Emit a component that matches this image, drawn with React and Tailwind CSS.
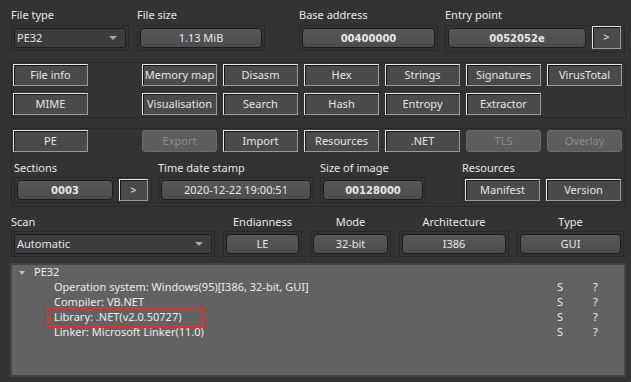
const BTN = "h-[22px] w-[75px] shrink-0 flex items-center justify-center bg-[#4a4a4a] border border-t-[#ececec] border-l-[#ececec] border-b-[#9a9a9a] border-r-[#9a9a9a] shadow-[inset_1px_1px_0_#141414] text-[#e6e6e6]";
const DIS = "h-[22px] w-[75px] shrink-0 flex items-center justify-center rounded-[3px] bg-[#5d5d5d] border border-[#6a6a6a] text-[#8c8c8c]";
const FIELD = "h-[20px] rounded-[4px] bg-linear-to-b from-[#585858] to-[#4c4c4c] border border-[#1c1c1c] flex items-center justify-center text-[#e8e8e8]";
const BOLD = "font-['DejaVu_Sans',sans-serif] font-bold text-[10px]";
const FRAME = "border border-[#282828] p-[2px]";

function Btn({ children, w }) {
  return <div className={BTN + (w ? " " + w : "")}>{children}</div>;
}

function Dis({ children }) {
  return <div className={DIS}>{children}</div>;
}

function Combo({ value }) {
  return (
    <div className="h-[20px] rounded-[3px] bg-[#3c3c3c] border border-[#1e1e1e] flex items-center justify-between pl-[2px] pr-[8px] text-[#e4e4e4]">
      <span>{value}</span>
      <span className="w-0 h-0 border-l-[4px] border-r-[4px] border-t-[4px] border-l-transparent border-r-transparent border-t-[#a8a8a8]" />
    </div>
  );
}

function Label({ children, center }) {
  return <div className={"h-[16px] leading-[16px] text-[#e8e8e8]" + (center ? " text-center" : "")}>{children}</div>;
}

const tree = [
  "Operation system: Windows(95)[I386, 32-bit, GUI]",
  "Compiler: VB.NET",
  "Library: .NET(v2.0.50727)",
  "Linker: Microsoft Linker(11.0)",
];

export default function App() {
  return (
    <div className="w-[631px] h-[382px] overflow-hidden bg-[#333333] text-[11px] font-['Noto_Sans',sans-serif] text-[#e6e6e6] pt-[7px]">
      {/* top fields */}
      <div className="flex pl-[11px]">
        <div className="w-[118px]">
          <Label>File type</Label>
          <div className={"mt-[2px] " + FRAME}>
            <Combo value="PE32" />
          </div>
        </div>
        <div className="w-[128px] ml-[8px]">
          <Label>File size</Label>
          <div className={"mt-[2px] " + FRAME}>
            <div className={FIELD}>1.13 MiB</div>
          </div>
        </div>
        <div className="w-[139px] ml-[34px]">
          <Label>Base address</Label>
          <div className={"mt-[2px] " + FRAME}>
            <div className={FIELD + " " + BOLD}>00400000</div>
          </div>
        </div>
        <div className="w-[180px] ml-[7px]">
          <Label>Entry point</Label>
          <div className={"mt-[2px] flex items-start gap-[6px] border border-[#282828] pl-[2px] pt-[1px] pb-[2px] pr-[3px]"}>
            <div className={FIELD + " " + BOLD + " flex-1 mt-[1px]"}>0052052e</div>
            <Btn w="!w-[29px] !h-[23px] -mt-[1px]">&gt;</Btn>
          </div>
        </div>
      </div>

      {/* tool buttons */}
      <div className="mt-[10px] ml-[11px] w-[615px] border border-[#282828] pl-[1px] pt-[1px] pb-[2px] flex flex-col gap-[7px]">
        <div className="flex gap-[6px]">
          <Btn>File info</Btn>
          <div className="w-[42px]" />
          <Btn>Memory map</Btn>
          <Btn>Disasm</Btn>
          <Btn>Hex</Btn>
          <Btn>Strings</Btn>
          <Btn>Signatures</Btn>
          <Btn>VirusTotal</Btn>
        </div>
        <div className="flex gap-[6px]">
          <Btn>MIME</Btn>
          <div className="w-[42px]" />
          <Btn>Visualisation</Btn>
          <Btn>Search</Btn>
          <Btn>Hash</Btn>
          <Btn>Entropy</Btn>
          <Btn>Extractor</Btn>
        </div>
      </div>

      {/* PE section */}
      <div className="mt-[10px] ml-[11px] w-[615px] border border-[#282828] pl-[1px] pt-[1px] pb-[3px]">
        <div className="flex gap-[6px]">
          <Btn>PE</Btn>
          <div className="w-[42px]" />
          <Dis>Export</Dis>
          <Btn>Import</Btn>
          <Btn>Resources</Btn>
          <Btn>.NET</Btn>
          <Dis>TLS</Dis>
          <Dis>Overlay</Dis>
        </div>
        <div className="flex mt-[8px]">
          <div className="w-[138px] ml-[1px]">
            <Label>Sections</Label>
            <div className="mt-[1px] flex items-center gap-[6px] border border-[#282828] pl-[2px] pr-[3px] h-[26px]">
              <div className={FIELD + " " + BOLD + " flex-1"}>0003</div>
              <Btn w="!w-[29px] !h-[22px]">&gt;</Btn>
            </div>
          </div>
          <div className="w-[156px] ml-[6px]">
            <Label>Time date stamp</Label>
            <div className={"mt-[1px] " + FRAME}>
              <div className={FIELD}>2020-12-22 19:00:51</div>
            </div>
          </div>
          <div className="w-[106px] ml-[6px]">
            <Label>Size of image</Label>
            <div className={"mt-[1px] " + FRAME}>
              <div className={FIELD + " " + BOLD}>00128000</div>
            </div>
          </div>
          <div className="w-[159px] ml-[36px]">
            <Label>Resources</Label>
            <div className="mt-[1px] h-[26px] border border-[#282828] pl-[2px] pt-[1px] flex gap-[6px]">
              <Btn>Manifest</Btn>
              <Btn>Version</Btn>
            </div>
          </div>
        </div>
      </div>

      {/* scan row */}
      <div className="flex mt-[7px] pl-[11px]">
        <div className="w-[204px]">
          <Label>Scan</Label>
          <div className={"mt-[1px] " + FRAME}>
            <Combo value="Automatic" />
          </div>
        </div>
        <div className="w-[79px] ml-[8px]">
          <Label center>Endianness</Label>
          <div className={"mt-[1px] " + FRAME}>
            <div className={FIELD}>LE</div>
          </div>
        </div>
        <div className="w-[81px] ml-[8px]">
          <Label center>Mode</Label>
          <div className={"mt-[1px] " + FRAME}>
            <div className={FIELD}>32-bit</div>
          </div>
        </div>
        <div className="w-[110px] ml-[8px]">
          <Label center>Architecture</Label>
          <div className={"mt-[1px] " + FRAME}>
            <div className={FIELD}>I386</div>
          </div>
        </div>
        <div className="w-[107px] ml-[8px]">
          <Label center>Type</Label>
          <div className={"mt-[1px] " + FRAME}>
            <div className={FIELD}>GUI</div>
          </div>
        </div>
      </div>

      {/* result tree */}
      <div className="mt-[6px] ml-[10px] w-[616px] h-[114px] bg-[#626262] border-2 border-[#444444] text-[#ececec]">
        <div className="h-[15px] flex items-center">
          <span className="ml-[7px] w-0 h-0 border-l-[3.5px] border-r-[3.5px] border-t-[4px] border-l-transparent border-r-transparent border-t-[#c4c4c4]" />
          <span className="ml-[9px]">PE32</span>
        </div>
        {tree.map((t, i) => (
          <div key={i} className="h-[15px] flex items-center relative">
            <span className="ml-[42px] w-[503px] whitespace-nowrap">{t}</span>
            <span className="w-[36px]">S</span>
            <span>?</span>
            {i === 2 && (
              <span className="absolute left-[35px] top-[-3px] w-[156px] h-[20px] border-2 border-[#e2302f]" />
            )}
          </div>
        ))}
      </div>
    </div>
  );
}
